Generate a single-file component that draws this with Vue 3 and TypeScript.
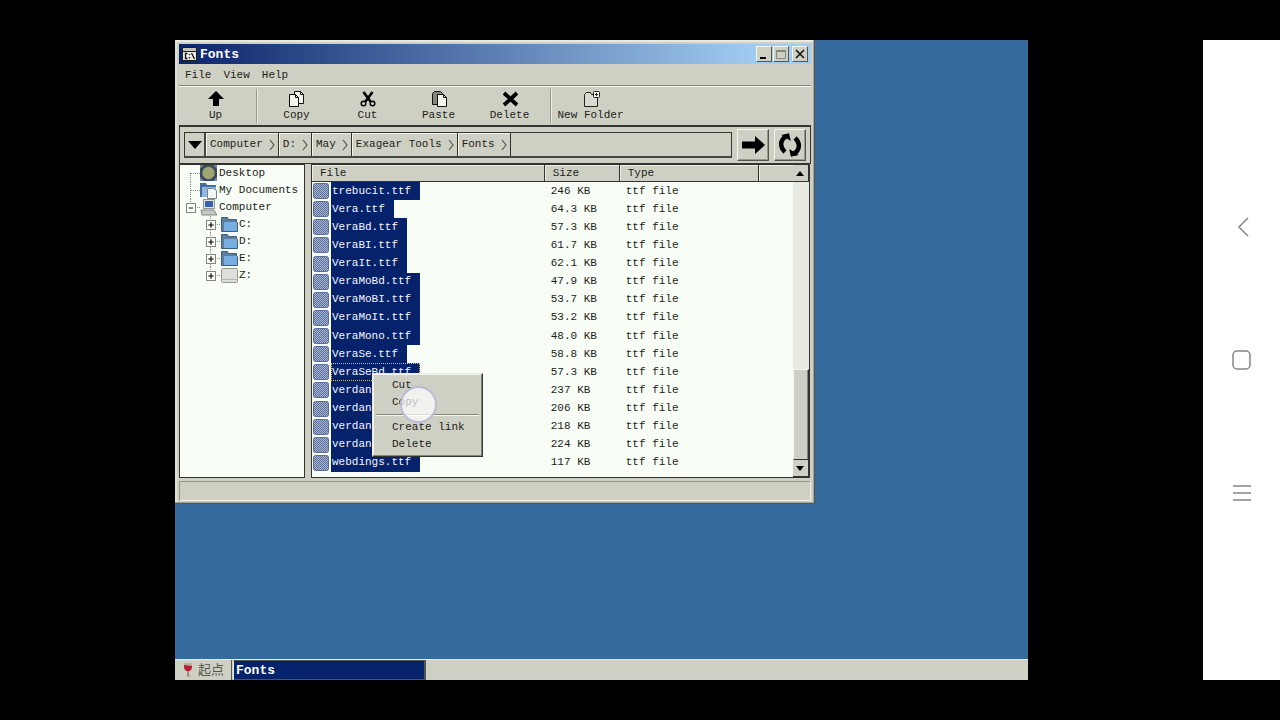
<script setup lang="ts">
import { ref } from 'vue'

interface FontFile {
  name: string
  size: string
}

const menus = ['File', 'View', 'Help']
const crumbs = ['Computer', 'D:', 'May', 'Exagear Tools', 'Fonts']
const drives = ['C:', 'D:', 'E:', 'Z:']
const path = ref('')

const files: FontFile[] = [
  { name: 'trebucit.ttf', size: '246 KB' },
  { name: 'Vera.ttf', size: '64.3 KB' },
  { name: 'VeraBd.ttf', size: '57.3 KB' },
  { name: 'VeraBI.ttf', size: '61.7 KB' },
  { name: 'VeraIt.ttf', size: '62.1 KB' },
  { name: 'VeraMoBd.ttf', size: '47.9 KB' },
  { name: 'VeraMoBI.ttf', size: '53.7 KB' },
  { name: 'VeraMoIt.ttf', size: '53.2 KB' },
  { name: 'VeraMono.ttf', size: '48.0 KB' },
  { name: 'VeraSe.ttf', size: '58.8 KB' },
  { name: 'VeraSeBd.ttf', size: '57.3 KB' },
  { name: 'verdan', size: '237 KB' },
  { name: 'verdan', size: '206 KB' },
  { name: 'verdan', size: '218 KB' },
  { name: 'verdan', size: '224 KB' },
  { name: 'webdings.ttf', size: '117 KB' },
]
const focused = 'VeraSeBd.ttf'
</script>

<template>
  <div class="screen">
    <main class="desktop">
      <div class="workspace">
        <section class="window" aria-label="Fonts">
          <header class="titlebar">
            <svg class="app-icon" viewBox="0 0 16 16" aria-hidden="true">
              <rect x="0" y="1" width="15" height="14" fill="#1b1b1b" />
              <rect x="1" y="2" width="13" height="3" fill="#c4c6bc" />
              <rect x="1" y="6" width="13" height="8" fill="#e9ece4" />
              <path d="M5.500 7.500H3.500V12.500H5.500M7.500 8v1M7.500 11v1.500M9.500 7l3 6" fill="none" stroke="#111" stroke-width="1.300" />
            </svg>
            <h1>Fonts</h1>
            <div class="controls">
              <button type="button" aria-label="Minimize">
                <svg viewBox="0 0 12 12"><path d="M2 10h6" stroke="#000" stroke-width="2" /></svg>
              </button>
              <button type="button" aria-label="Maximize">
                <svg viewBox="0 0 12 12"><path d="M1.500 2.500h9v8h-9zM1.500 3.500h9" fill="none" stroke="#85877d" /></svg>
              </button>
              <button type="button" class="close" aria-label="Close">
                <svg viewBox="0 0 12 12"><path d="M2 2l8 8M10 2l-8 8" stroke="#111" stroke-width="1.600" /></svg>
              </button>
            </div>
          </header>

          <nav class="menubar">
            <button v-for="m in menus" :key="m" type="button">{{ m }}</button>
          </nav>

          <div class="toolbar">
            <button type="button">
              <svg viewBox="0 0 18 18"><path d="M9 1l8 8h-5v7H6V9H1z" fill="#000" /></svg>
              Up
            </button>
            <i class="sep"></i>
            <button type="button">
              <svg viewBox="0 0 18 18" fill="#f4f6ee" stroke="#111">
                <path d="M6.500 1.500h6l3 3v9h-9z" />
                <path d="M12.500 1.500v3h3" fill="none" />
                <path d="M1.500 4.500h6l3 3v9h-9z" />
                <path d="M7.500 4.500v3h3" fill="none" />
              </svg>
              Copy
            </button>
            <button type="button">
              <svg viewBox="0 0 18 18" fill="none" stroke="#000">
                <path d="M4.500 2l7 9.500M13.500 2l-7 9.500" stroke-width="2.600" />
                <circle cx="4.500" cy="13.500" r="2.300" stroke-width="1.500" />
                <circle cx="13.500" cy="13.500" r="2.300" stroke-width="1.500" />
              </svg>
              Cut
            </button>
            <button type="button">
              <svg viewBox="0 0 18 18" stroke="#111">
                <path d="M2.500 14.500v-11l2-2h6l2 2v11z" fill="#85877d" />
                <path d="M7.500 4.500h6l3 3v9h-9z" fill="#f4f6ee" />
                <path d="M13.500 4.500v3h3" fill="none" />
              </svg>
              Paste
            </button>
            <button type="button">
              <svg viewBox="0 0 18 18"><path d="M3 3l13 12M16 3L3 15" stroke="#000" stroke-width="3.800" /></svg>
              Delete
            </button>
            <i class="sep"></i>
            <button type="button">
              <svg viewBox="0 0 18 18" stroke="#222">
                <path d="M2.500 16.500v-12l2-2h4l1 2h6v12z" fill="#d9dbd0" />
                <rect x="11.500" y="1.500" width="6" height="6" rx="1" fill="#f4f6ee" />
                <path d="M14.500 3v3M13 4.500h3" />
              </svg>
              New Folder
            </button>
          </div>

          <div class="address">
            <div class="crumbs">
              <button type="button" class="drop" aria-label="History">
                <svg viewBox="0 0 14 8"><path d="M0 0h14L7 8z" fill="#000" /></svg>
              </button>
              <button v-for="c in crumbs" :key="c" type="button" class="crumb">
                {{ c }}
                <svg viewBox="0 0 6 12"><path d="M1 1l4 5-4 5" fill="none" stroke="#55574f" stroke-width="1.200" /></svg>
              </button>
              <input v-model="path" type="text" aria-label="Path" />
            </div>
            <button type="button" class="big" aria-label="Go">
              <svg viewBox="0 0 26 26"><path d="M2 9.500h13V4l10 9-10 9v-5.500H2z" fill="#000" /></svg>
            </button>
            <button type="button" class="big" aria-label="Refresh">
              <svg viewBox="0 0 26 26">
                <path d="M8 20C2.500 15 3 8 9 4.500" fill="none" stroke="#000" stroke-width="4.500" />
                <path d="M5 2h8v8z" fill="#000" transform="rotate(-12 9 6)" />
                <path d="M18 6C23.500 11 23 18 17 21.500" fill="none" stroke="#000" stroke-width="4.500" />
                <path d="M21 24h-8v-8z" fill="#000" transform="rotate(-12 17 20)" />
              </svg>
            </button>
          </div>

          <div class="panes">
            <ul class="tree">
              <li class="top first">
                <svg class="ticon" viewBox="0 0 17 17">
                  <rect width="17" height="16" y="0" fill="#34466a" />
                  <circle cx="8.500" cy="8" r="6.500" fill="#9fa673" stroke="#59634f" />
                  <path d="M0 0h4L0 4zM17 0h-4l4 4zM0 16h4l-4-4zM17 16h-4l4-4z" fill="#7e8799" />
                </svg>
                Desktop
              </li>
              <li class="top">
                <svg class="ticon" viewBox="0 0 17 17">
                  <path d="M0 1h6l1 2h9v12H0z" fill="#426c9c" />
                  <path d="M2 5h14v10H2z" fill="#8fb6dc" />
                  <path d="M7.500 6.500h6l3 2v8h-9z" fill="#f3f6f4" stroke="#7b858b" />
                </svg>
                My Documents
              </li>
              <li class="top last">
                <button type="button" class="toggle" aria-label="Collapse">
                  <svg viewBox="0 0 9 9"><path d="M2 4.500h5" stroke="#000" /></svg>
                </button>
                <svg class="ticon" viewBox="0 0 17 17">
                  <rect x="3.500" y="0.500" width="11" height="9" fill="#e4e7e3" stroke="#8e928f" />
                  <rect x="5" y="2" width="8" height="6" fill="#3760b0" />
                  <path d="M1 11h13l3 5H2z" fill="#c6cac6" stroke="#848884" />
                </svg>
                Computer
              </li>
              <li v-for="d in drives" :key="d" class="drive">
                <button type="button" class="toggle" :aria-label="'Expand ' + d">
                  <svg viewBox="0 0 9 9"><path d="M1.500 4.500h6M4.500 1.500v6" stroke="#000" stroke-width="1.300" /></svg>
                </button>
                <svg v-if="d !== 'Z:'" class="ticon" viewBox="0 0 17 17">
                  <path d="M0.500 15.500v-14h6l1 2h8v3h1v9z" fill="#5d7f9f" stroke="#405f80" />
                  <path d="M3 6h13v9H3z" fill="#79aee2" />
                </svg>
                <svg v-else class="ticon" viewBox="0 0 17 17">
                  <rect x="0.500" y="1.500" width="16" height="14" rx="1" fill="#dddfda" stroke="#969891" />
                  <path d="M1 12.500h15" stroke="#b4b6b0" />
                </svg>
                {{ d }}
              </li>
            </ul>

            <div class="list">
              <table>
                <colgroup>
                  <col />
                  <col class="c-size" />
                  <col class="c-type" />
                  <col class="c-rest" />
                </colgroup>
                <thead>
                  <tr>
                    <th scope="col">File</th>
                    <th scope="col">Size</th>
                    <th scope="col">Type</th>
                    <th></th>
                  </tr>
                </thead>
                <tbody>
                  <tr v-for="(f, i) in files" :key="i">
                    <td>
                      <div class="name">
                        <svg viewBox="0 0 16 16" aria-hidden="true">
                          <defs>
                            <pattern id="dither" width="2" height="2" patternUnits="userSpaceOnUse">
                              <rect width="2" height="2" fill="#a9b5ce" />
                              <rect width="1" height="1" fill="#5a709f" />
                              <rect x="1" y="1" width="1" height="1" fill="#5a709f" />
                            </pattern>
                          </defs>
                          <rect x="0.500" y="0.500" width="15" height="15" rx="2" fill="url(#dither)" stroke="#5a6d99" />
                        </svg>
                        <span :class="{ focused: f.name === focused }">{{ f.name }}</span>
                      </div>
                    </td>
                    <td>{{ f.size }}</td>
                    <td>ttf file</td>
                    <td></td>
                  </tr>
                </tbody>
              </table>
              <div class="scrollbar">
                <button type="button" class="arrow up" aria-label="Scroll up">
                  <svg viewBox="0 0 8 5"><path d="M0 5h8L4 0z" fill="#000" /></svg>
                </button>
                <div class="track"></div>
                <div class="thumb"></div>
                <button type="button" class="arrow" aria-label="Scroll down">
                  <svg viewBox="0 0 8 5"><path d="M0 0h8L4 5z" fill="#000" /></svg>
                </button>
              </div>
            </div>
          </div>

          <footer class="status"></footer>

          <div class="context" role="menu">
            <button type="button" role="menuitem">Cut</button>
            <button type="button" role="menuitem">Copy</button>
            <hr />
            <button type="button" role="menuitem">Create link</button>
            <button type="button" role="menuitem">Delete</button>
          </div>
          <div class="touch"></div>
        </section>
      </div>

      <footer class="taskbar">
        <button type="button" class="start">
          <svg viewBox="0 0 12 16" aria-hidden="true">
            <path d="M2 1h8l0 4c0 3-2 4-3 4v4l3 2H3l3-2V9C4 9 2 8 2 5z" fill="#c9a9a4" />
            <path d="M2 3l8 1c0 3-1 5-4 5S2 7 2 3z" fill="#b3202b" />
            <path d="M6 9v5" stroke="#75504c" />
          </svg>
          起点
        </button>
        <button type="button" class="task">Fonts</button>
      </footer>
    </main>

    <nav class="phone">
      <button type="button" aria-label="Back">
        <svg viewBox="0 0 20 20"><path d="M16 1L7 10l9 9" /></svg>
      </button>
      <button type="button" aria-label="Home">
        <svg viewBox="0 0 20 20"><rect x="1" y="1" width="17" height="18" rx="4" /></svg>
      </button>
      <button type="button" aria-label="Recent apps">
        <svg viewBox="0 0 20 20"><path d="M1 3h18M1 10h18M1 17h18" /></svg>
      </button>
    </nav>
  </div>
</template>

<style>
body {
  background: #000;
}
</style>

<style scoped>
* {
  box-sizing: border-box;
}
.screen {
  display: flex;
  min-height: 100vh;
  padding: 40px 0 40px 175px;
  gap: 175px;
  background: #000;
  color: #1c1d19;
  font: 11px/17px 'Liberation Mono', 'Noto Sans CJK SC', monospace;
}
button {
  margin: 0;
  padding: 0;
  border: 0;
  background: none;
  color: inherit;
  font: inherit;
  white-space: nowrap;
}
svg {
  display: block;
  flex: none;
}
.desktop {
  flex: 1;
  min-width: 0;
  display: flex;
  flex-direction: column;
  background: #346a9c;
}
.workspace {
  flex: 1;
}
.window {
  position: relative;
  width: 75%;
  padding: 4px 4px 3px;
  background: #cfd0c4;
  box-shadow: inset -1px -1px #55574f, inset -2px -2px #a3a498, inset 0 2px #e8eae0, inset 2px 0 #dfe1d6;
}
.titlebar {
  display: flex;
  align-items: center;
  height: 20px;
  padding: 0 3px;
  background: linear-gradient(90deg, #0a246a, #a2cdf2 92%);
}
.app-icon {
  width: 16px;
  height: 16px;
}
h1 {
  flex: 1;
  margin: 0 0 0 2px;
  color: #fff;
  font-size: 13px;
  font-weight: bold;
}
.controls {
  display: flex;
}
.controls button {
  display: grid;
  place-items: center;
  width: 16px;
  height: 16px;
  margin-left: 1px;
  background: #cfd0c4;
  border: 1px solid;
  border-color: #f4f6ee #55574f #55574f #f4f6ee;
}
.controls .close {
  margin-left: 3px;
}
.controls svg {
  width: 12px;
  height: 12px;
}
.menubar {
  display: flex;
  gap: 12px;
  height: 22px;
  padding: 2px 0 0 6px;
  border-bottom: 1px solid #85877d;
}
.toolbar {
  display: flex;
  height: 39px;
  padding: 3px 1px 0;
  border-top: 1px solid #f4f6ee;
}
.toolbar button {
  display: flex;
  flex-direction: column;
  align-items: center;
  width: 71px;
  line-height: 14px;
}
.toolbar svg {
  width: 18px;
  height: 18px;
}
.sep {
  flex: none;
  width: 2px;
  margin: -1px 3px 2px 5px;
  border-left: 1px solid #96988c;
  border-right: 1px solid #eef0e6;
}
.address {
  display: flex;
  align-items: center;
  gap: 5px;
  height: 39px;
  padding: 0 4px;
  border: 1px solid #33342f;
  border-top-width: 2px;
}
.crumbs {
  flex: 1;
  display: flex;
  min-width: 0;
  height: 26px;
  border: 1px solid #33342f;
  border-bottom: 2px solid #44463f;
}
.drop {
  display: grid;
  place-items: center;
  width: 21px;
  border-right: 2px solid #44463f;
}
.drop svg {
  width: 14px;
  height: 8px;
}
.crumb {
  display: flex;
  align-items: center;
  gap: 6px;
  padding: 0 3px 0 4px;
  border-right: 1px solid #33342f;
  box-shadow: inset 1px 1px #f4f6ee;
}
.crumb svg {
  width: 6px;
  height: 12px;
}
.crumbs input {
  flex: 1;
  min-width: 0;
  padding: 0 4px;
  border: 0;
  outline: 0;
  background: none;
  font: inherit;
}
.big {
  display: grid;
  place-items: center;
  width: 32px;
  height: 32px;
  border: 1px solid;
  border-color: #f4f6ee #55574f #55574f #f4f6ee;
  box-shadow: inset -1px -1px #96988c;
}
.big svg {
  width: 26px;
  height: 26px;
}
.panes {
  display: flex;
  gap: 6px;
  padding-right: 1px;
}
.tree {
  flex: none;
  width: 126px;
  margin: 0;
  padding: 0;
  list-style: none;
  background: #f8fdf6;
  border: 1px solid #33342f;
}
.tree li {
  position: relative;
  display: flex;
  align-items: center;
  height: 17px;
  padding-left: 20px;
  gap: 2px;
  white-space: nowrap;
}
.tree .drive {
  padding-left: 41px;
  gap: 1px;
}
.tree li::before {
  content: '';
  position: absolute;
  left: 10px;
  top: 0;
  bottom: 0;
  width: 10px;
  border-left: 1px dotted #8d8f86;
}
.tree li::after {
  content: '';
  position: absolute;
  left: 10px;
  top: 8px;
  width: 10px;
  border-top: 1px dotted #8d8f86;
}
.tree .first::before {
  top: 8px;
}
.tree .last::before {
  bottom: 8px;
}
.tree .drive::before,
.tree .drive::after {
  left: 30px;
}
.tree .drive:last-child::before {
  bottom: 8px;
}
.ticon {
  width: 17px;
  height: 17px;
}
.toggle {
  position: absolute;
  z-index: 1;
  left: 6px;
  top: 4px;
  background: #f8fdf6;
  border: 1px solid #85877d;
}
.drive .toggle {
  left: 26px;
}
.toggle svg {
  width: 8px;
  height: 8px;
}
.list {
  flex: 1;
  min-width: 0;
  display: flex;
  align-items: flex-start;
  padding-bottom: 5px;
  background: #f8fdf6;
  border: 1px solid #33342f;
}
table {
  flex: 1;
  width: 0;
  height: 307px;
  table-layout: fixed;
  border-collapse: separate;
  border-spacing: 0;
}
.c-size {
  width: 75px;
}
.c-type {
  width: 139px;
}
.c-rest {
  width: 34px;
}
th {
  height: 17px;
  padding: 0 0 0 8px;
  background: #cfd0c4;
  border-right: 1px solid #33342f;
  border-bottom: 1px solid #33342f;
  box-shadow: inset 1px 1px #eef0e6;
  font-weight: normal;
  line-height: 16px;
  text-align: left;
}
th:last-child {
  border-right: 0;
}
td {
  height: 18px;
  padding: 0 0 0 6px;
  white-space: nowrap;
}
td:first-child {
  padding-left: 1px;
}
.name {
  display: flex;
  align-items: center;
  gap: 2px;
  height: 100%;
}
.name svg {
  width: 16px;
  height: 16px;
}
.name span {
  display: flex;
  align-items: center;
  height: 100%;
  padding: 0 9px 0 1px;
  background: #06226a;
  color: #f4f6ff;
}
.name .focused {
  outline: 1px dotted #c9b878;
  outline-offset: -1px;
}
.scrollbar {
  align-self: stretch;
  flex: none;
  display: flex;
  flex-direction: column;
  width: 16px;
  margin-bottom: -5px;
  background: #e8ebe2;
}
.arrow {
  display: grid;
  place-items: center;
  height: 17px;
  background: #cfd0c4;
  border-right: 1px solid #33342f;
  border-bottom: 1px solid #33342f;
}
.arrow svg {
  width: 8px;
  height: 5px;
}
.track {
  flex: 188;
}
.thumb {
  flex: 90;
  background: #cfd0c4;
  border: 1px solid;
  border-color: #f4f6ee #33342f #33342f #f4f6ee;
  box-shadow: inset -1px 0 #85877d;
}
.status {
  height: 20px;
  margin-top: 3px;
  border: 1px solid;
  border-color: #96988c #eef0e6 #eef0e6 #96988c;
}
.context {
  position: absolute;
  left: 197px;
  top: 333px;
  width: 111px;
  padding: 3px;
  background: #cfd0c4;
  border: 1px solid;
  border-color: #e8eae0 #33342f #33342f #e8eae0;
  box-shadow: inset -1px -1px #85877d, inset 1px 1px #f4f6ee;
}
.context button {
  display: block;
  width: 100%;
  padding-left: 16px;
  text-align: left;
}
.context hr {
  margin: 3px 0;
  border: 0;
  border-top: 1px solid #85877d;
  border-bottom: 1px solid #f4f6ee;
}
.touch {
  position: absolute;
  left: 225px;
  top: 346px;
  width: 37px;
  height: 37px;
  border: 2px solid #b9bad8;
  border-radius: 50%;
  background: rgba(255, 255, 255, 0.7);
}
.taskbar {
  display: flex;
  height: 21px;
  background: #cfd0c4;
  border-top: 1px solid #e8eae0;
}
.start {
  display: flex;
  align-items: center;
  gap: 4px;
  width: 57px;
  padding-left: 7px;
  border-right: 1px solid #55574f;
  color: #55574f;
  font-size: 13px;
}
.start svg {
  width: 12px;
  height: 16px;
}
.task {
  width: 193px;
  margin-left: 1px;
  padding-left: 2px;
  background: #06226a;
  border: 1px solid #55574f;
  border-right-width: 2px;
  border-left-color: #e8eae0;
  color: #fff;
  font-size: 13px;
  font-weight: bold;
  text-align: left;
}
.phone {
  flex: none;
  display: flex;
  flex-direction: column;
  align-items: center;
  justify-content: center;
  gap: 113px;
  width: 77px;
  background: #fefffe;
}
.phone svg {
  width: 20px;
  height: 20px;
  fill: none;
  stroke: #858585;
  stroke-width: 1.5;
}
</style>
